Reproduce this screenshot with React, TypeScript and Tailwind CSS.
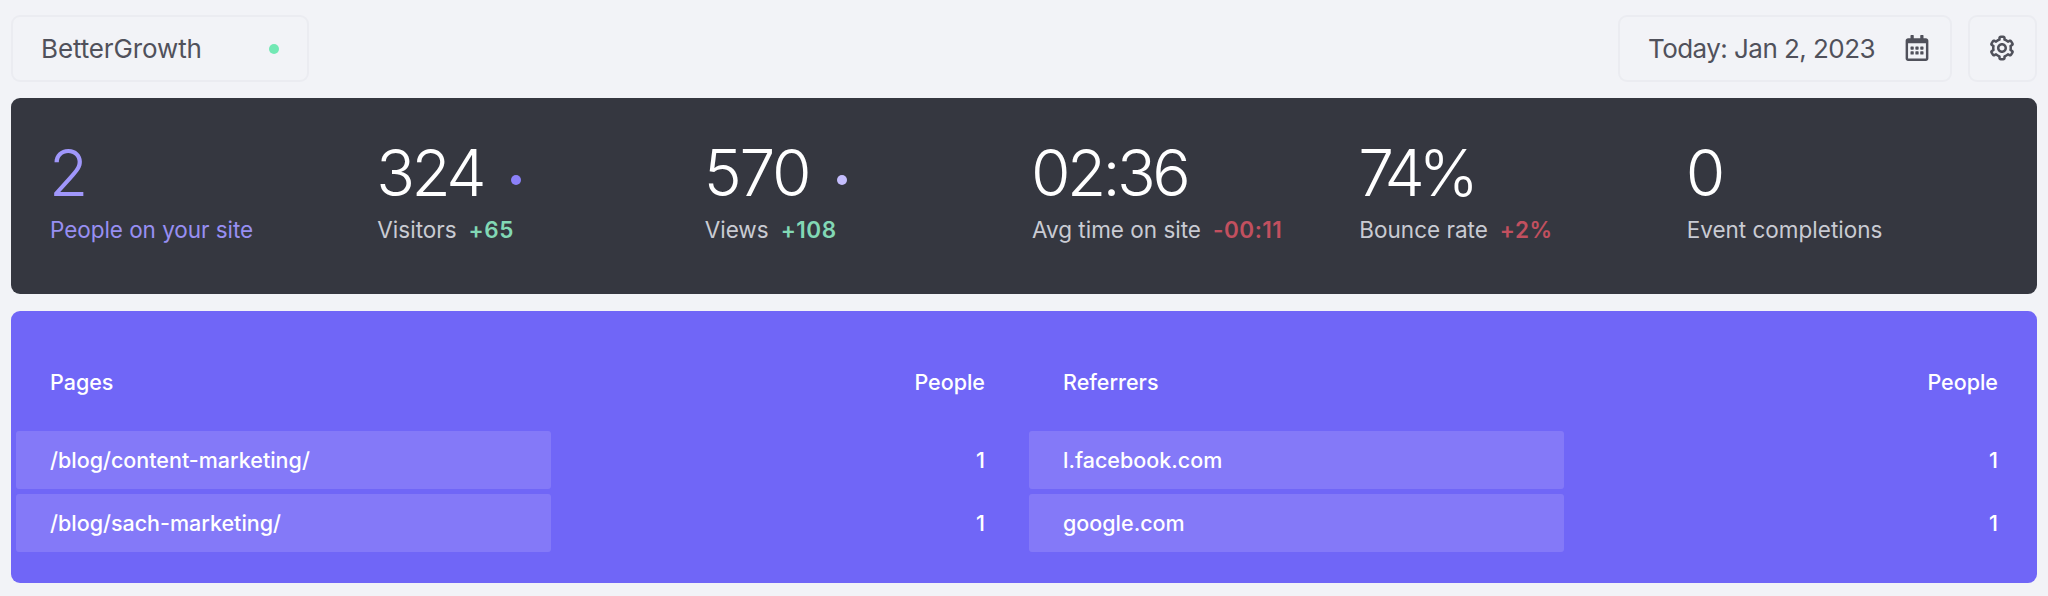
import React from 'react';
import { BiCog } from 'react-icons/bi';
import { FaRegCalendarAlt } from 'react-icons/fa';

type Stat = {
  value: string;
  label: string;
  tracking: string;
  delta?: string;
  deltaTone?: string;
  dot?: string;
  live?: boolean;
};

const stats: Stat[] = [
  { value: '2', label: 'People on your site', tracking: 'tracking-normal', live: true },
  { value: '324', label: 'Visitors', tracking: 'tracking-[-3.6px]', delta: '+65', deltaTone: 'text-[#82d8b5]', dot: 'bg-[#8b80f9]' },
  { value: '570', label: 'Views', tracking: 'tracking-[-2.2px]', delta: '+108', deltaTone: 'text-[#82d8b5]', dot: 'bg-[#c4bdfd]' },
  { value: '02:36', label: 'Avg time on site', tracking: 'tracking-[-3.6px]', delta: '-00:11', deltaTone: 'text-[#c2505f]' },
  { value: '74%', label: 'Bounce rate', tracking: 'tracking-[-6px]', delta: '+2%', deltaTone: 'text-[#c2505f]' },
  { value: '0', label: 'Event completions', tracking: 'tracking-normal' },
];

const tables = [
  { title: 'Pages', rows: [{ name: '/blog/content-marketing/', people: 1 }, { name: '/blog/sach-marketing/', people: 1 }] },
  { title: 'Referrers', rows: [{ name: 'l.facebook.com', people: 1 }, { name: 'google.com', people: 1 }] },
];

export default function App() {
  return (
    <div className="h-[596px] bg-[#f2f3f7] px-[11px] pt-[15px] font-['Inter',sans-serif]">
      <header className="flex h-[67px] justify-between text-[26px] text-[#50515b]">
        <div className="flex w-[298px] items-center justify-between rounded-[9px] border-2 border-[#ebecf1] pr-[28px] pl-[28px]">
          <span className="tracking-[-0.12px]">BetterGrowth</span>
          <span className="size-[10px] rounded-full bg-[#72e8b4]" />
        </div>
        <div className="flex gap-4">
          <div className="flex w-[334px] items-center justify-between rounded-[9px] border-2 border-[#ebecf1] pr-[20px] pl-[28px]">
            <span className="tracking-[-0.55px]">Today: Jan 2, 2023</span>
            <FaRegCalendarAlt className="mb-px size-[26px]" />
          </div>
          <div className="flex w-[69px] items-center justify-center rounded-[9px] border-2 border-[#ebecf1]">
            <BiCog className="mr-px mb-px size-[30px]" />
          </div>
        </div>
      </header>

      <section className="mt-4 grid h-[196px] grid-cols-6 rounded-[9px] bg-[#353740] pt-[43px] pr-[24px] pl-[38px] text-white">
        {stats.map((s) => (
          <div key={s.label} className={s.live ? 'text-[#a097fb]' : 'text-white'}>
            <div className="flex h-[64px] items-center text-[64px] leading-[64px] font-light">
              <span className={s.tracking}>{s.value}</span>
              {s.dot && <span className={`mt-[14px] ml-[28px] size-[10px] rounded-full ${s.dot}`} />}
            </div>
            <div className="mt-[10px] flex gap-[12px] pl-px text-[22.5px] leading-[30px]">
              <span className={s.live ? 'tracking-[-0.05px] text-[#988ff2]' : 'text-[#c9cbd3]'}>{s.label}</span>
              {s.delta && <span className={`font-semibold tracking-[0.5px] ${s.deltaTone}`}>{s.delta}</span>}
            </div>
          </div>
        ))}
      </section>

      <section className="mt-[17px] grid h-[272px] grid-cols-2 rounded-[9px] bg-[#7066f7] pt-[55px] text-[21.5px] leading-[32px] font-medium text-white">
        {tables.map((t) => (
          <div key={t.title}>
            <div className="flex justify-between pr-[39px] pl-[39px]">
              <span>{t.title}</span>
              <span>People</span>
            </div>
            <div className="mt-[33px] flex flex-col gap-[5px] pr-[39px] pl-[5px]">
              {t.rows.map((r) => (
                <div key={r.name} className="flex h-[58px] items-center justify-between">
                  <div className="flex h-full w-[535px] items-center rounded-[3px] bg-[#8479f8] pl-[34px]">{r.name}</div>
                  <span>{r.people}</span>
                </div>
              ))}
            </div>
          </div>
        ))}
      </section>
    </div>
  );
}
